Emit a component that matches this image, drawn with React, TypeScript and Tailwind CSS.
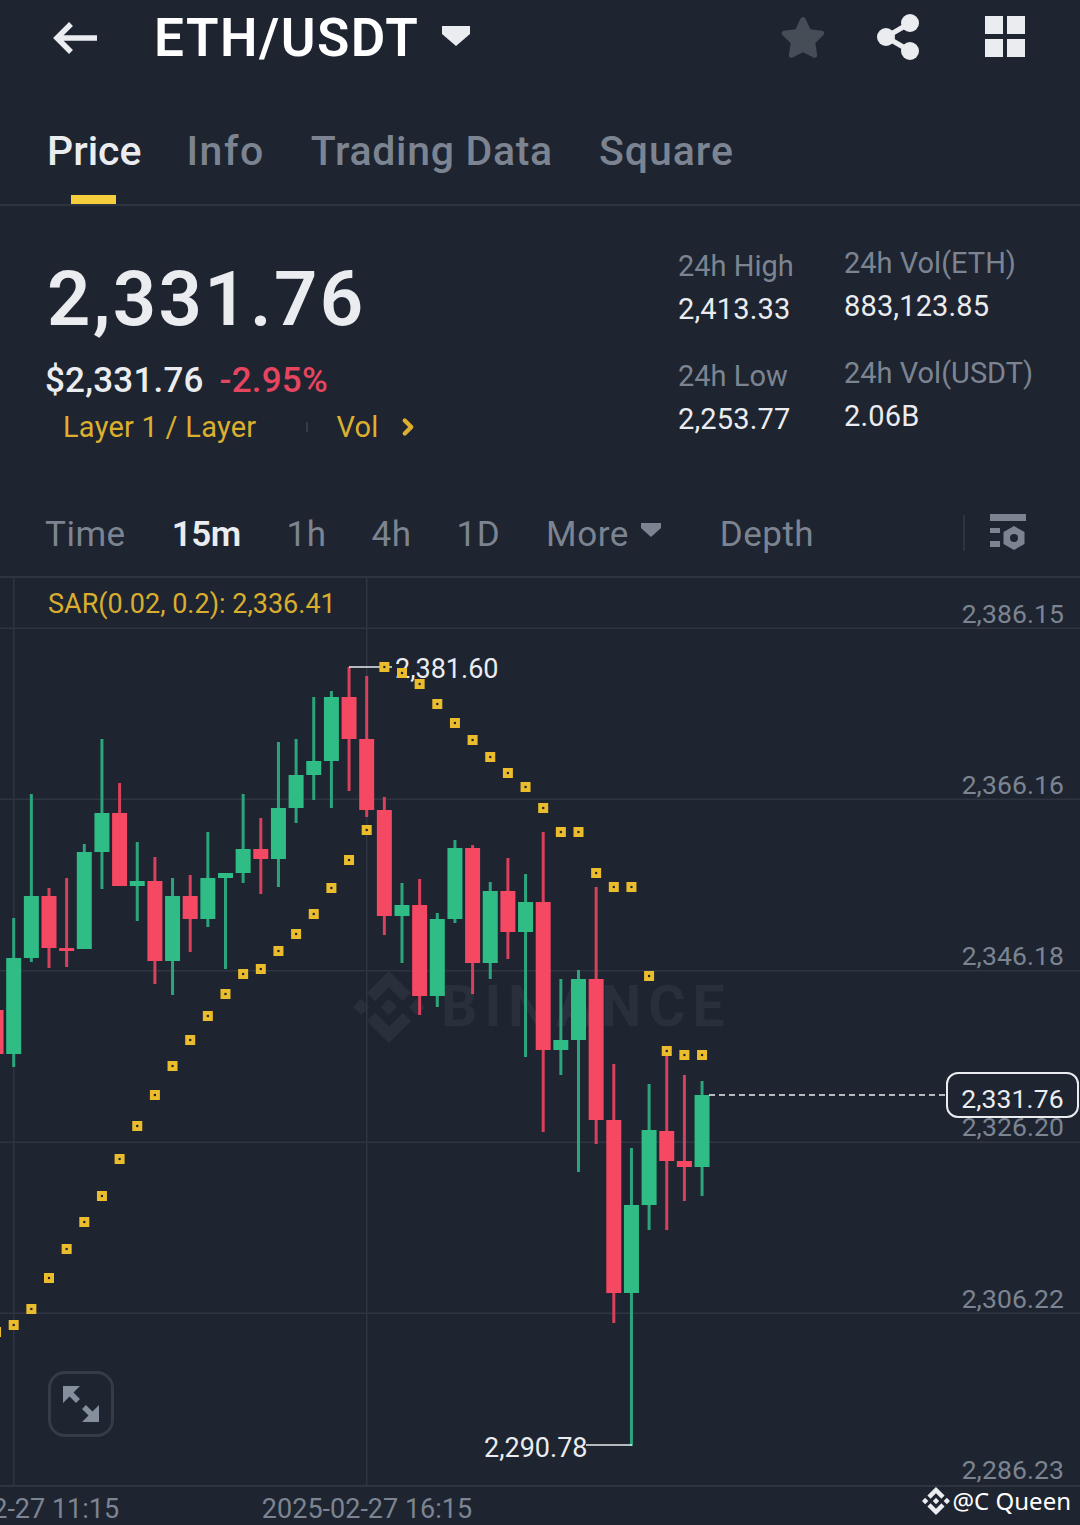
import { ChevronRight } from "lucide-react";

// [cx index, up?, wick top, body top, body bottom, wick bottom]
type Candle = [number, boolean, number, number, number, number];

const CHART_TOP = 578;
const BINANCE_PATH =
  "M16.624 13.9202l2.7175 2.7154-7.353 7.353-7.353-7.352 2.7175-2.7164 4.6355 4.6595 4.6356-4.6595zm4.6366-4.6366L24 12l-2.7154 2.7164L18.5682 12l2.6924-2.7164zm-9.272.001l2.7163 2.6914-2.7164 2.7174v-.001L9.2721 12l2.7164-2.7154zm-9.2722-.001L5.4088 12l-2.6914 2.6924L0 12l2.7164-2.7164zM11.9885.0115l7.353 7.329-2.7174 2.7154-4.6356-4.6356-4.6355 4.6595-2.7174-2.7154 7.353-7.353z";

const candles: Candle[] = [
  [-1, false, 1010, 1010, 1054, 1054],
  [0, true, 918, 958, 1054, 1067],
  [1, true, 794, 896, 958, 962],
  [2, false, 888, 896, 948, 968],
  [3, false, 878, 948, 951, 967],
  [4, true, 844, 852, 949, 949],
  [5, true, 739, 813, 852, 889],
  [6, false, 783, 813, 886, 886],
  [7, true, 842, 881, 886, 921],
  [8, false, 857, 881, 961, 984],
  [9, true, 878, 896, 961, 995],
  [10, false, 875, 896, 919, 952],
  [11, true, 832, 878, 919, 927],
  [12, true, 873, 873, 878, 969],
  [13, true, 794, 849, 873, 883],
  [14, false, 818, 849, 859, 894],
  [15, true, 742, 808, 859, 887],
  [16, true, 739, 775, 808, 823],
  [17, true, 697, 761, 775, 800],
  [18, true, 691, 697, 761, 808],
  [19, false, 667, 697, 739, 791],
  [20, false, 676, 739, 810, 817],
  [21, false, 797, 810, 916, 935],
  [22, true, 883, 905, 916, 963],
  [23, false, 879, 905, 996, 1015],
  [24, true, 913, 919, 996, 1007],
  [25, true, 840, 848, 919, 923],
  [26, false, 845, 848, 963, 994],
  [27, true, 882, 891, 963, 979],
  [28, false, 858, 891, 932, 959],
  [29, true, 874, 902, 932, 1057],
  [30, false, 832, 902, 1050, 1132],
  [31, true, 979, 1040, 1050, 1075],
  [32, true, 970, 979, 1040, 1172],
  [33, false, 887, 979, 1120, 1144],
  [34, false, 1064, 1120, 1293, 1323],
  [35, true, 1148, 1205, 1293, 1446],
  [36, true, 1084, 1130, 1205, 1230],
  [37, false, 1052, 1131, 1161, 1230],
  [38, false, 1075, 1161, 1167, 1201],
  [39, true, 1081, 1095, 1167, 1196],
];

// SAR dots, first one sits on candle -1
const sar = [
  1332, 1325, 1309, 1278, 1249, 1222, 1196, 1159, 1126, 1095, 1066, 1040, 1016, 994, 974, 969, 951,
  934, 914, 888, 860, 830, 667, 673, 684, 704, 723, 740, 757, 773, 787, 808, 832, 832, 873, 887,
  887, 976, 1051, 1055, 1055,
];

const gridY = [628.5, 799.5, 971, 1142.5, 1313.5];
const axis = [
  ["2,386.15", 614],
  ["2,366.16", 785],
  ["2,346.18", 956],
  ["2,326.20", 1127],
  ["2,306.22", 1299],
  ["2,286.23", 1470],
] as const;

const cx = (i: number) => 13.7 + 17.65 * i;

function Header() {
  return (
    <div className="flex h-[75px] items-center pl-[52px] pr-[55px]">
      <svg width="46" height="36" viewBox="0 0 46 36" className="shrink-0">
        <path d="M45 18H6M19 4 5 18l14 14" fill="none" stroke="#eaecef" strokeWidth="5.5" />
      </svg>
      <span className="ml-[56px] mt-[2px] text-[53px] leading-none font-semibold tracking-[1.5px] text-white">ETH/USDT</span>
      <svg width="30" height="22" viewBox="0 0 30 22" className="ml-[22px] mb-[3px]">
        <path d="M1 1h28v8L15 21 1 9z" fill="#eaecef" />
      </svg>
      <div className="mb-[2px] ml-auto flex items-center">
        <svg width="46" height="46" viewBox="0 0 24 24" className="text-[#474d57]">
          <path
            d="M12 1.5c.6 0 1 .4 1.3 1l2.6 5.5 6 .8c1.2.2 1.6 1.4.8 2.2l-4.3 4.2 1 6c.2 1.2-1 2-2 1.500L12 19.900 6.600 22.700c-1 .5-2.200-.3-2-1.500l1-6-4.300-4.200c-.8-.8-.4-2 .8-2.200l6-.8 2.600-5.500c.3-.6.700-1 1.300-1z"
            fill="currentColor"
          />
        </svg>
        <svg width="46" height="48" viewBox="0 0 46 48" className="ml-[50px] mb-[1px]">
          <path d="M34 11 10 25l24 14" fill="none" stroke="#eaecef" strokeWidth="5" />
          <circle cx="34" cy="11" r="9" fill="#eaecef" />
          <circle cx="10" cy="25" r="9" fill="#eaecef" />
          <circle cx="34" cy="39" r="9" fill="#eaecef" />
        </svg>
        <div className="ml-[63px] grid grid-cols-[18px_18px] grid-rows-[18px_18px] gap-[4.500px]">
          <span className="bg-[#eaecef]" />
          <span className="bg-[#eaecef]" />
          <span className="bg-[#eaecef]" />
          <span className="bg-[#eaecef]" />
        </div>
      </div>
    </div>
  );
}

function Tabs() {
  return (
    <div className="flex h-[131px] items-start border-b-2 border-[#2f3540] pl-[47px] pt-[49px] text-[41px] leading-[54px] font-medium tracking-[0.7px] text-[#7c8492]">
      <div className="relative tracking-normal text-[#eaecef]">
        Price
        <span className="absolute left-[24px] top-[71px] h-[9px] w-[45px] bg-[#f5cd3d]" />
      </div>
      <div className="ml-[45px] tracking-[1.5px]">Info</div>
      <div className="ml-[46px]">Trading Data</div>
      <div className="ml-[46px] tracking-[1px]">Square</div>
    </div>
  );
}

function Stat({ label, value }: { label: string; value: string }) {
  return (
    <div>
      <div className="text-[29px] leading-[36px] text-[#7c8492]">{label}</div>
      <div className="mt-[7px] text-[29px] leading-[36px] tracking-[0.15px] text-[#eaecef]">{value}</div>
    </div>
  );
}

function Summary() {
  return (
    <div className="flex h-[272px] pl-[46px]">
      <div className="w-[632px]">
        <div className="mt-[48px] pl-[1px] text-[76px] leading-[90px] font-semibold tracking-[2.3px] text-[#eaecef]">2,331.76</div>
        <div className="-ml-[1px] mt-[15px] flex items-center text-[35px] leading-[44px] font-medium tracking-[0.2px]">
          <span className="text-[#eaecef]">$2,331.76</span>
          <span className="ml-[16px] text-[#e6455f]">-2.95%</span>
        </div>
        <div className="mt-[4px] flex items-center pl-[17px] text-[29px] leading-[40px] tracking-[0.25px] text-[#dcb02e]">
          <span>Layer 1 / Layer</span>
          <span className="ml-[50px] h-[10px] w-[2px] bg-[#363c47]" />
          <span className="ml-[28px]">Vol</span>
          <ChevronRight className="ml-[16px] text-[#dcb02e]" size={26} strokeWidth={4} />
        </div>
      </div>
      <div className="flex gap-[50px] pt-[42px]">
        <div className="flex w-[116px] flex-col gap-[31px]">
          <Stat label="24h High" value="2,413.33" />
          <Stat label="24h Low" value="2,253.77" />
        </div>
        <div className="-mt-[3px] flex flex-col gap-[31px]">
          <Stat label="24h Vol(ETH)" value="883,123.85" />
          <Stat label="24h Vol(USDT)" value="2.06B" />
        </div>
      </div>
    </div>
  );
}

function Intervals() {
  return (
    <div className="flex h-[100px] items-start border-b-2 border-[#2f3540] pl-[45px] pt-[34px] text-[35px] leading-[46px] tracking-[0.5px] text-[#7c8492]">
      <span>Time</span>
      <span className="ml-[46px] font-semibold tracking-[-0.5px] text-[#eaecef]">15m</span>
      <span className="ml-[46px]">1h</span>
      <span className="ml-[45px]">4h</span>
      <span className="ml-[45px]">1D</span>
      <span className="ml-[46px]">More</span>
      <svg width="20" height="14" viewBox="0 0 20 14" className="ml-[12px] mt-[11px]">
        <path d="M0 0h20v5l-10 9L0 5z" fill="#7c8492" />
      </svg>
      <span className="ml-[59px]">Depth</span>
      <span className="ml-auto mt-[3px] h-[36px] w-[2px] bg-[#2f3540]" />
      <svg width="36" height="36" viewBox="0 0 36 36" className="ml-[25px] mr-[54px] mt-[2px]">
        <path d="M0 0h36v7H0zM0 14h10v5H0zM0 27h10v6H0z" fill="#7c8492" />
        <path d="M24 12l10.500 6v12L24 36l-10.500-6V18z" fill="#7c8492" />
        <circle cx="24" cy="24" r="4" fill="#1e2430" />
      </svg>
    </div>
  );
}

function Chart() {
  return (
    <div className="relative h-[907px] overflow-hidden text-[27px] leading-[34px]">
      {/* watermark */}
      <div className="absolute left-[353px] top-[393px] flex items-center">
        <svg width="72" height="72" viewBox="0 0 24 24">
          <path d={BINANCE_PATH} fill="#2a303b" />
        </svg>
        <span className="ml-[16px] text-[57px] leading-[72px] font-bold tracking-[7px] text-[#2a303b]">BINANCE</span>
      </div>

      <svg width="1080" height="907" viewBox={`0 ${CHART_TOP} 1080 907`} className="absolute left-0 top-0">
        {gridY.map((y) => (
          <rect key={y} x="0" y={y - 1} width="1080" height="1.500" fill="#2f3540" />
        ))}
        <rect x="13" y={CHART_TOP} width="1.500" height="907" fill="#2f3540" />
        <rect x="366" y={CHART_TOP} width="1.500" height="907" fill="#2f3540" />

        {candles.map(([i, up, wt, bt, bb, wb]) => (
          <g key={i}>
            <rect x={cx(i) - 1.5} y={wt} width="3" height={wb - wt} fill={up ? "#2ba57c" : "#d9405b"} />
            <rect x={cx(i) - 7.5} y={bt} width="15" height={bb - bt} fill={up ? "#2fbd85" : "#f44863"} />
          </g>
        ))}

        <path d="M349 667h43" stroke="#eaecef" strokeWidth="1.500" fill="none" />
        <path d="M586 1445h46" stroke="#eaecef" strokeWidth="1.500" fill="none" />
        <path d="M709 1095h236" stroke="#eaecef" strokeWidth="1.500" strokeDasharray="6 4" fill="none" />
      </svg>

      <span className="absolute left-[395px] top-[74px] text-[#eaecef]">2,381.60</span>
      <span className="absolute left-[484px] top-[853px] text-[#eaecef]">2,290.78</span>

      {/* SAR sits above the labels, it covers the first digit of the high */}
      <svg width="1080" height="907" viewBox={`0 ${CHART_TOP} 1080 907`} className="absolute left-0 top-0">
        {sar.map((y, n) => (
          <g key={n}>
            <rect x={cx(n - 1) - 5} y={y - 5} width="10" height="10" fill="#ebbd2c" />
            <rect x={cx(n - 1) - 1.1} y={y - 1.1} width="2.200" height="2.200" fill="#1e2430" />
          </g>
        ))}
      </svg>

      <span className="absolute left-[48px] top-[9px] text-[#d9ae2f]">SAR(0.02, 0.2): 2,336.41</span>

      {axis.map(([label, y]) => (
        <span
          key={label}
          className="absolute right-[16px] text-[26.5px] tracking-[0.1px] text-[#7c8492]"
          style={{ top: y - CHART_TOP - 17 }}
        >
          {label}
        </span>
      ))}

      <div className="absolute left-[946px] top-[494px] flex h-[46px] w-[133px] items-center justify-center rounded-[12px] border-2 border-[#eaecef] bg-[#1e2430] pt-[8px] text-[26.5px] tracking-[0.1px] text-[#eaecef]">
        2,331.76
      </div>

      <div className="absolute left-[48px] top-[793px] flex h-[66px] w-[66px] items-center justify-center rounded-[17px] border-[3px] border-[#363c47]">
        <svg width="38" height="38" viewBox="0 0 38 38">
          <path d="M1 1h17L1 18zM37 37H20l17-17z" fill="#848e9c" />
          <path d="M8 8l8 8M22 22l8 8" stroke="#848e9c" strokeWidth="5.500" fill="none" />
        </svg>
      </div>
    </div>
  );
}

function Footer() {
  return (
    <div className="relative h-[40px] overflow-hidden border-t-2 border-[#2f3540] text-[27px] leading-[34px] text-[#7c8492]">
      <span className="absolute left-[14px] top-[5px] -translate-x-1/2 whitespace-nowrap">2025-02-27 11:15</span>
      <span className="absolute left-[367px] top-[5px] -translate-x-1/2 whitespace-nowrap">2025-02-27 16:15</span>
    </div>
  );
}

function UserMark() {
  return (
    <div className="absolute bottom-[7px] right-[9px] flex items-center text-white" style={{ fontFamily: '"Noto Sans", sans-serif' }}>
      <svg width="28" height="28" viewBox="0 0 24 24">
        <path d={BINANCE_PATH} fill="#eaecef" />
      </svg>
      <span className="ml-[3px] text-[24px] leading-[34px]">@C Queen</span>
    </div>
  );
}

export default function App() {
  return (
    <div
      className="relative flex h-[1525px] w-[1080px] flex-col overflow-hidden bg-[#1e2430]"
      style={{ fontFamily: 'Roboto, "Noto Sans", sans-serif' }}
    >
      <Header />
      <Tabs />
      <Summary />
      <Intervals />
      <Chart />
      <Footer />
      <UserMark />
    </div>
  );
}
